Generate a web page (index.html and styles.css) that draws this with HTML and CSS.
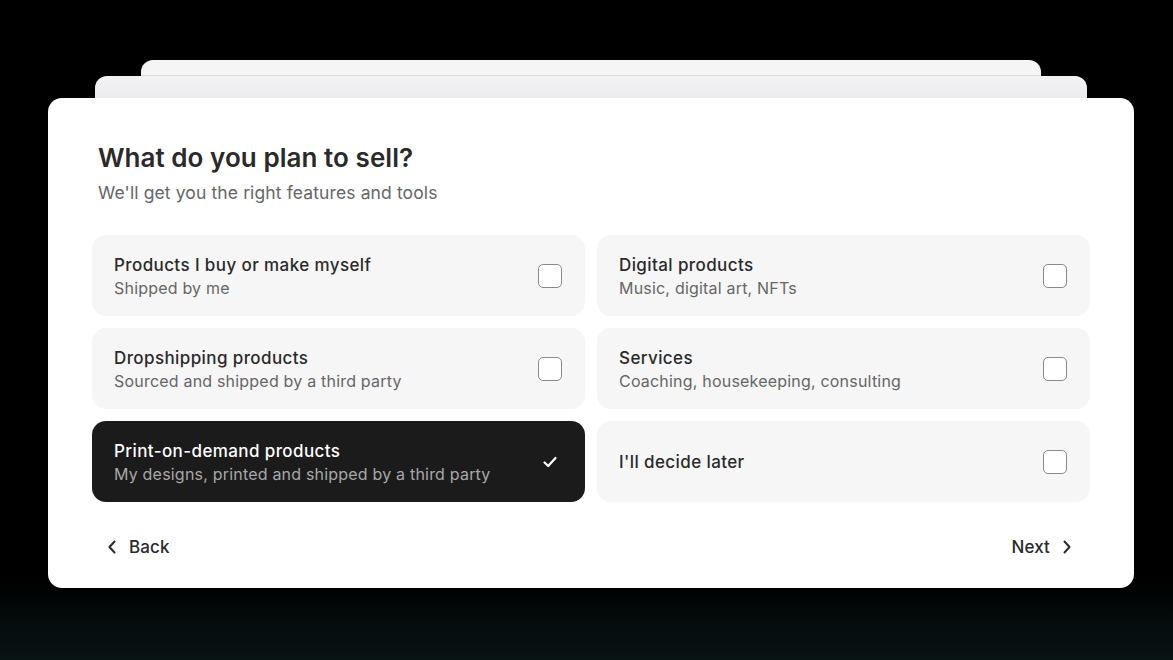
FILE: index.html
```html
<!DOCTYPE html>
<html lang="en">
<head>
    <meta charset="UTF-8">
    <title>What do you plan to sell?</title>
    <link rel="stylesheet" href="styles.css">
</head>
<body>
<div class="stack">
    <div class="layer layer-back"></div>
    <div class="layer layer-mid"></div>
    <div class="card">
        <h1 class="title">What do you plan to sell?</h1>
        <p class="subtitle">We'll get you the right features and tools</p>

        <div class="options">
            <div class="option">
                <div class="option-text">
                    <div class="option-name">Products I buy or make myself</div>
                    <div class="option-desc">Shipped by me</div>
                </div>
                <span class="box"></span>
            </div>
            <div class="option">
                <div class="option-text">
                    <div class="option-name">Digital products</div>
                    <div class="option-desc">Music, digital art, NFTs</div>
                </div>
                <span class="box"></span>
            </div>
            <div class="option">
                <div class="option-text">
                    <div class="option-name">Dropshipping products</div>
                    <div class="option-desc">Sourced and shipped by a third party</div>
                </div>
                <span class="box"></span>
            </div>
            <div class="option">
                <div class="option-text">
                    <div class="option-name">Services</div>
                    <div class="option-desc">Coaching, housekeeping, consulting</div>
                </div>
                <span class="box"></span>
            </div>
            <div class="option selected">
                <div class="option-text">
                    <div class="option-name">Print-on-demand products</div>
                    <div class="option-desc">My designs, printed and shipped by a third party</div>
                </div>
                <svg class="check" width="16" height="16" viewBox="0 0 16 16">
                    <path d="M2.5 8.5 L6.2 12 L13.5 4" fill="none" stroke="#fff" stroke-width="2.2" stroke-linecap="round" stroke-linejoin="round"/>
                </svg>
            </div>
            <div class="option">
                <div class="option-text">
                    <div class="option-name">I'll decide later</div>
                </div>
                <span class="box"></span>
            </div>
        </div>

        <div class="footer">
            <button class="nav-btn back">
                <svg width="10" height="14" viewBox="0 0 10 14">
                    <path d="M7.5 1.5 L2.5 7 L7.5 12.5" fill="none" stroke="#2a2a2a" stroke-width="2" stroke-linecap="round" stroke-linejoin="round"/>
                </svg>
                Back
            </button>
            <button class="nav-btn next">
                Next
                <svg width="10" height="14" viewBox="0 0 10 14">
                    <path d="M2.5 1.5 L7.5 7 L2.5 12.5" fill="none" stroke="#2a2a2a" stroke-width="2" stroke-linecap="round" stroke-linejoin="round"/>
                </svg>
            </button>
        </div>
    </div>
</div>
</body>
</html>
```

FILE: styles.css
```css
* {
    box-sizing: border-box;
    font-family: Inter, "Noto Sans", sans-serif;
}

html, body {
    height: 100%;
}

body {
    margin: 0;
    background: linear-gradient(180deg, #000 0%, #000 88%, #050d0d 95%, #081313 100%);
    overflow: hidden;
}

.stack {
    width: 1086px;
    margin: 60px 0 0 48px;
    display: flex;
    flex-direction: column;
    align-items: center;
}

.layer {
    border-radius: 12px 12px 0 0;
}

.layer-back {
    width: 900px;
    height: 16px;
    background: #f5f5f5;
    border-bottom: 1px solid #dedede;
}

.layer-mid {
    width: 992px;
    height: 22px;
    background: linear-gradient(180deg, #f3f3f4 0%, #ebebed 100%);
}

.card {
    width: 100%;
    background: #fff;
    border-radius: 14px;
    padding: 44px 44px 29px 44px;
}

.title {
    margin: 0 0 0 6px;
    font-size: 26px;
    line-height: 32px;
    font-weight: 600;
    color: #2a2a2a;
    letter-spacing: 0.05px;
}

.subtitle {
    margin: 7px 0 0 6px;
    font-size: 17.5px;
    line-height: 24px;
    color: #666;
    letter-spacing: 0.12px;
}

.options {
    display: grid;
    grid-template-columns: 1fr 1fr;
    gap: 12px;
    margin-top: 30px;
}

.option {
    height: 81px;
    display: flex;
    align-items: center;
    justify-content: space-between;
    padding: 0 23px 0 22px;
    background: #f6f6f6;
    border-radius: 14px;
}

.option-name {
    font-size: 17px;
    line-height: 24px;
    font-weight: 500;
    color: #2a2a2a;
    letter-spacing: 0.4px;
}

.option-desc {
    font-size: 16px;
    line-height: 22px;
    color: #666;
    letter-spacing: 0.2px;
}

.box {
    width: 24px;
    height: 24px;
    border: 1.5px solid #8a8a8a;
    border-radius: 5px;
    background: #fff;
}

.selected {
    background: #1b1b1b;
}

.selected .option-name {
    color: #fff;
}

.selected .option-desc {
    color: #a8a8a8;
}

.check {
    margin-right: 4px;
}

.footer {
    display: flex;
    justify-content: space-between;
    align-items: center;
    margin-top: 33px;
}

.nav-btn {
    display: flex;
    align-items: center;
    gap: 12px;
    background: none;
    border: none;
    font-size: 17px;
    line-height: 24px;
    font-weight: 500;
    color: #2a2a2a;
    letter-spacing: 0.1px;
    cursor: pointer;
}

.back {
    padding: 0 0 0 15px;
}

.next {
    padding: 0 18px 0 0;
}
```
